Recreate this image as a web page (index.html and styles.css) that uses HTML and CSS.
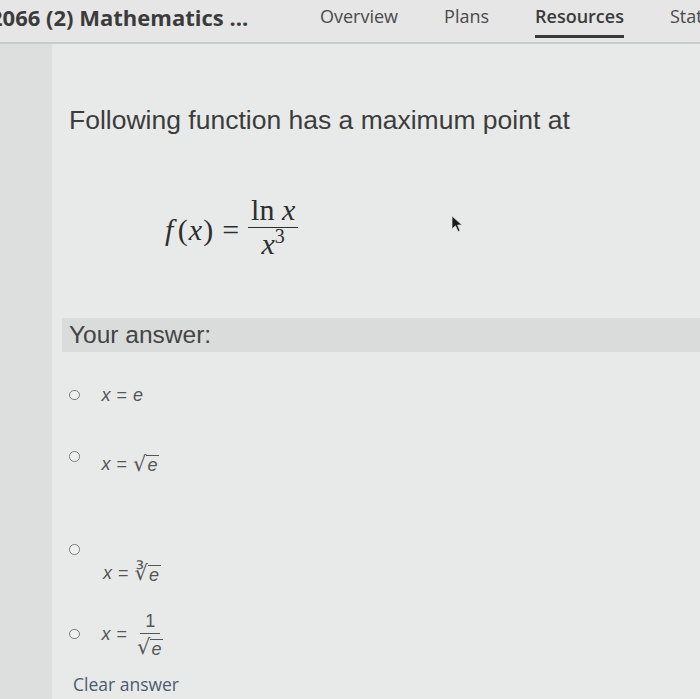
FILE: index.html
```html
<!DOCTYPE html>
<html>
<head>
<meta charset="utf-8">
<link rel="stylesheet" href="styles.css">
</head>
<body>
<div class="page">
  <header class="topbar">
    <div class="title">2066 (2) Mathematics ...</div>
    <nav class="nav">
      <span class="tab">Overview</span>
      <span class="tab">Plans</span>
      <span class="tab active">Resources</span>
      <span class="tab">Stat</span>
    </nav>
  </header>
  <div class="body">
    <aside class="rail"></aside>
    <main class="content">
      <p class="question">Following function has a maximum point at</p>
      <div class="formula">
        <span class="fx"><i>f</i>&#8202;(<i>x</i>)</span>
        <span class="eq">=</span>
        <span class="frac">
          <span class="num">ln <i>x</i></span>
          <span class="den"><i>x</i><sup>3</sup></span>
        </span>
      </div>
      <div class="answer-bar">Your answer:</div>
      <div class="options">
        <div class="opt opt1">
          <span class="radio"></span>
          <span class="m"><i>x</i><span class="meq">=</span><i>e</i></span>
        </div>
        <div class="opt opt2">
          <span class="radio"></span>
          <span class="m"><i>x</i><span class="meq">=</span><span class="rad">√</span><span class="under"><i>e</i></span></span>
        </div>
        <div class="opt opt3">
          <span class="radio"></span>
          <span class="m"><i>x</i><span class="meq">=</span><span class="rad">∛</span><span class="under"><i>e</i></span></span>
        </div>
        <div class="opt opt4">
          <span class="radio"></span>
          <span class="m"><i>x</i><span class="meq">=</span>
            <span class="mfrac">
              <span class="mnum">1</span>
              <span class="mden"><span class="rad">√</span><span class="under"><i>e</i></span></span>
            </span>
          </span>
        </div>
      </div>
      <div class="clear">Clear answer</div>
    </main>
  </div>
  <svg class="cursor" width="14" height="18" viewBox="0 0 14 18">
    <path d="M1 1 L1 14 L4.5 10.8 L7 16.5 L9 15.6 L6.6 10 L11 10 Z" fill="#1a1a1a" stroke="#d8d8d8" stroke-width="0.8"/>
  </svg>
</div>
</body>
</html>
```

FILE: styles.css
```css
html, body {
  margin: 0;
  padding: 0;
}
body {
  width: 700px;
  height: 699px;
  overflow: hidden;
  background: #e7e9e8;
}
.page {
  position: relative;
  width: 700px;
  height: 699px;
  display: flex;
  flex-direction: column;
}
.topbar {
  height: 42px;
  flex: 0 0 42px;
  background: #e5e6e5;
  border-bottom: 2px solid #c9cbca;
  display: flex;
  align-items: flex-start;
  white-space: nowrap;
  overflow: hidden;
  font-family: "Open Sans", "Liberation Sans", sans-serif;
  color: #3b3b3b;
}
.title {
  flex: 0 0 330px;
  margin-left: -10px;
  font-size: 22px;
  font-weight: 700;
  line-height: 28px;
  padding-top: 3px;
}
.nav {
  display: flex;
  gap: 46px;
  font-size: 18px;
  line-height: 24px;
  padding-top: 4px;
  color: #4a4a4a;
}
.tab {
  height: 34px;
}
.tab.active {
  font-weight: 600;
  color: #3a3a3a;
  border-bottom: 3px solid #3a3a3a;
  height: 31px;
}
.body {
  flex: 1;
  display: flex;
}
.rail {
  flex: 0 0 52px;
  background: #dcdfde;
}
.content {
  flex: 1;
  padding-left: 10px;
  background: #e8eae9;
  font-family: "Liberation Sans", Arial, sans-serif;
  color: #3c3c3c;
}
.question {
  margin: 61px 0 0 7px;
  font-size: 26.5px;
  line-height: 30px;
}
.formula {
  margin: 57px 0 0 103px;
  display: flex;
  align-items: center;
  font-family: "Liberation Serif", "DejaVu Serif", serif;
  font-size: 30px;
  color: #2e2e2e;
  height: 70px;
}
.fx {
  margin-top: 6px;
  letter-spacing: 1px;
}
.eq {
  margin: 6px 9px 0 8px;
}
.frac {
  display: inline-flex;
  flex-direction: column;
  align-items: center;
}
.num {
  padding: 0 3px 2px;
  border-bottom: 1.6px solid #2e2e2e;
  line-height: 30px;
}
.den {
  line-height: 32px;
}
.den sup {
  font-size: 20px;
  vertical-align: 11px;
  line-height: 0;
  font-style: normal;
}
.answer-bar {
  margin-top: 56px;
  height: 34px;
  line-height: 34px;
  padding-left: 7px;
  background: #d9dcdb;
  font-size: 24.5px;
  color: #444;
}
.options {
  margin-left: 7px;
  font-family: "Liberation Sans", Arial, sans-serif;
  font-size: 18px;
  color: #555;
}
.opt {
  display: flex;
}
.radio {
  flex: 0 0 auto;
  width: 8.5px;
  height: 8.5px;
  border: 1.7px solid #7c7f7e;
  border-radius: 50%;
  background: #eef0ef;
}
.m {
  margin-left: 22px;
  display: inline-flex;
  align-items: center;
  line-height: 20px;
}
.m i {
  font-style: italic;
}
.meq {
  margin: 0 6px;
}
.rad {
  font-family: "DejaVu Sans", sans-serif;
  font-size: 21px;
  line-height: 20px;
}
.under {
  border-top: 1.3px solid #555;
  padding: 0 2px 0 1px;
  line-height: 18px;
  margin-top: 2px;
}
.opt1 {
  margin-top: 33px;
  align-items: center;
  height: 20px;
}
.opt2 {
  margin-top: 46px;
  align-items: flex-start;
}
.opt2 .m {
  margin-top: 2px;
}
.opt3 {
  margin-top: 70px;
  flex-direction: column;
}
.opt3 .m {
  margin: 8px 0 0 34px;
}
.opt4 {
  margin-top: 27px;
  align-items: center;
}
.mfrac {
  display: inline-flex;
  flex-direction: column;
  align-items: center;
  margin-left: 4px;
}
.mnum {
  padding: 0 5px 2px;
  border-bottom: 1.3px solid #555;
  line-height: 20px;
}
.mden {
  display: inline-flex;
  align-items: center;
  padding-top: 3px;
}
.clear {
  margin: 14px 0 0 11px;
  font-family: "Open Sans", "Liberation Sans", sans-serif;
  font-size: 17.5px;
  line-height: 24px;
  color: #4b5a70;
}
.cursor {
  position: absolute;
  left: 451px;
  top: 215px;
}
```
